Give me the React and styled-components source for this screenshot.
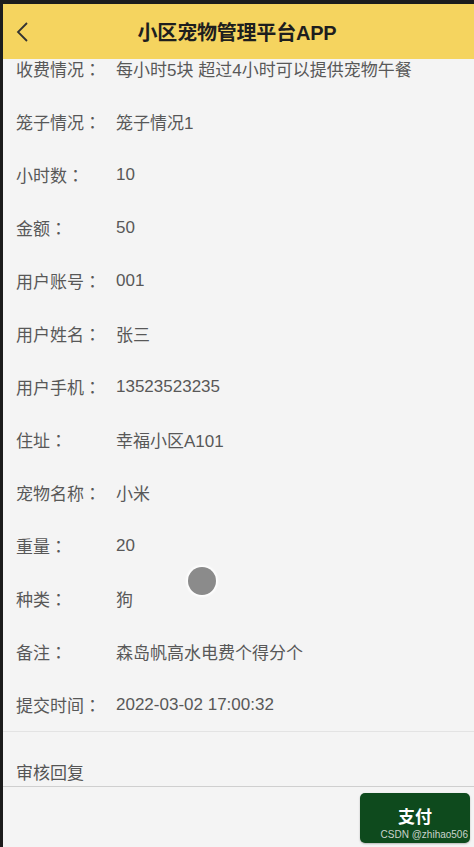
import styled, { createGlobalStyle } from "styled-components"

const GlobalStyle = createGlobalStyle`
    html, body {
        margin: 0;
        padding: 0;
        background: #f4f4f4;
    }
    * {
        box-sizing: border-box;
    }
`

const Frame = styled.div`
    position: relative;
    height: 847px;
    overflow: hidden;
    background: #f4f4f4;
    border-top: 4px solid #1c1c1c;
    border-left: 3px solid #1c1c1c;
    font-family: "Liberation Sans", "Noto Sans CJK SC", sans-serif;
`

// app bar sits over the list, which is scrolled a bit under it
const Header = styled.div`
    position: absolute;
    top: 0;
    left: -3px;
    right: 0;
    height: 55px;
    z-index: 2;
    display: grid;
    grid-template-columns: 1fr auto 1fr;
    align-items: center;
    padding: 0 14px;
    background: #f5d45f;
`

const Back = styled.button`
    justify-self: start;
    width: 18px;
    height: 22px;
    padding: 0;
    border: none;
    background: none;
    display: flex;
`

const Title = styled.h1`
    margin: 0;
    font-size: 20px;
    font-weight: 700;
    color: #1e1e1e;
    letter-spacing: -0.2px;
`

const List = styled.div`
    margin-top: 38px;
    border-bottom: 1px solid #e3e3e3;
`

const Row = styled.div`
    display: flex;
    align-items: center;
    height: 53px;
    padding-left: 13px;
    font-size: 17px;
    color: #585858;
`

const Label = styled.span`
    width: 100px;
    flex-shrink: 0;
    white-space: nowrap;
`

const Colon = styled.span`
    font-family: "Noto Sans CJK TC", sans-serif;
`

const Value = styled.span`
    white-space: nowrap;
`

const Reply = styled.div`
    display: flex;
    align-items: flex-end;
    height: 55px;
    padding: 0 0 4px 13px;
    font-size: 17px;
    line-height: 17px;
    color: #555;
    border-bottom: 1px solid #cfcfcf;
`

const Footer = styled.div`
    display: flex;
    justify-content: flex-end;
    padding: 6px 4px 0 0;
`

const PayButton = styled.button`
    position: relative;
    width: 110px;
    height: 50px;
    border: none;
    border-radius: 5px;
    background: #0e4a1d;
    box-shadow: 0 1px 2px rgba(0, 0, 0, 0.25);
    color: #fff;
    font-family: inherit;
    font-size: 17px;
    font-weight: 700;
    padding: 0 0 6px;
`

const Watermark = styled.span`
    position: absolute;
    right: 2px;
    bottom: 3px;
    font-size: 10px;
    font-weight: 400;
    color: #c9d3cb;
    white-space: nowrap;
`

const TouchDot = styled.div`
    position: absolute;
    left: 185px;
    top: 563px;
    width: 28px;
    height: 28px;
    border-radius: 50%;
    background: #8b8b8b;
    box-shadow: 0 0 2px 2px rgba(255, 255, 255, 0.9);
    filter: blur(0.6px);
`

const fields = [
    ["收费情况", "每小时5块 超过4小时可以提供宠物午餐"],
    ["笼子情况", "笼子情况1"],
    ["小时数", "10"],
    ["金额", "50"],
    ["用户账号", "001"],
    ["用户姓名", "张三"],
    ["用户手机", "13523523235"],
    ["住址", "幸福小区A101"],
    ["宠物名称", "小米"],
    ["重量", "20"],
    ["种类", "狗"],
    ["备注", "森岛帆高水电费个得分个"],
    ["提交时间", "2022-03-02 17:00:32"],
]

const App = () => {
    return (
        <>
            <GlobalStyle />
            <Frame>
                <Header>
                    <Back aria-label="返回">
                        <svg width="18" height="22" viewBox="0 0 18 22">
                            <polyline
                                points="13,2 4,11 13,20"
                                fill="none"
                                stroke="#333"
                                strokeWidth="1.8"
                            />
                        </svg>
                    </Back>
                    <Title>小区宠物管理平台APP</Title>
                </Header>
                <List>
                    {fields.map(([label, value]) => (
                        <Row key={label}>
                            <Label>
                                {label}
                                <Colon>：</Colon>
                            </Label>
                            <Value>{value}</Value>
                        </Row>
                    ))}
                </List>
                <Reply>审核回复</Reply>
                <Footer>
                    <PayButton>
                        支付
                        <Watermark>CSDN @zhihao506</Watermark>
                    </PayButton>
                </Footer>
                <TouchDot />
            </Frame>
        </>
    )
}

export default App
